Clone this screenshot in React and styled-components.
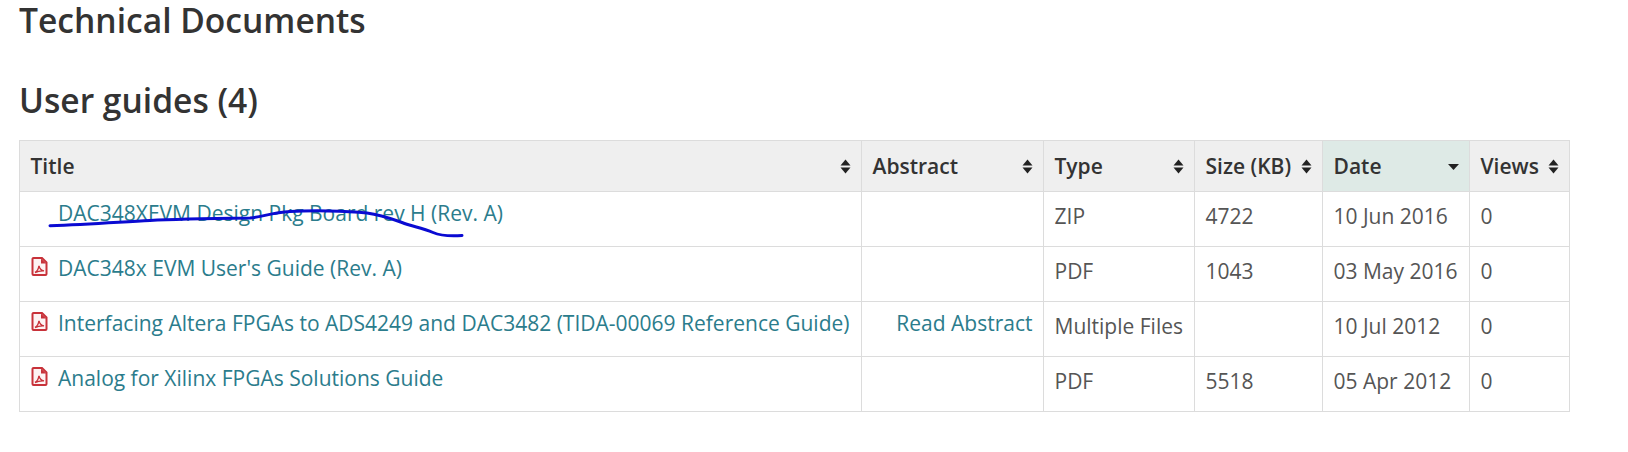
import React from 'react';
import styled, { createGlobalStyle } from 'styled-components';

const GlobalStyle = createGlobalStyle`
    html, body {
        margin: 0;
        background: #fff;
        font-family: 'Open Sans', sans-serif;
        color: #333;
    }
`;

const Page = styled.div`
    position: relative;
    width: 1628px;
    height: 452px;
    overflow: hidden;
    padding: 0 0 0 19px;
    box-sizing: border-box;
`;

const Heading = styled.h2`
    margin: 0;
    font-size: 33.6px;
    line-height: 40px;
    font-weight: 600;
    color: #333;
`;

const SubHeading = styled(Heading)`
    margin-top: 40px;
    margin-bottom: 20px;
`;

const Table = styled.table`
    width: 1550px;
    table-layout: fixed;
    border-collapse: collapse;
    font-size: 21px;
`;

const Th = styled.th`
    position: relative;
    height: 51px;
    padding: 0 10.5px;
    box-sizing: border-box;
    text-align: left;
    font-weight: 600;
    color: #333;
    white-space: nowrap;
    background: ${(p) => (p.$active ? '#deeae6' : '#efefef')};
    border: 1px solid #dcdcdc;
`;

const Td = styled.td`
    height: 55px;
    padding: 0 10.5px;
    box-sizing: border-box;
    vertical-align: top;
    color: #555;
    white-space: nowrap;
    border: 1px solid #dcdcdc;
`;

const CellText = styled.div`
    padding-top: 10px;
    line-height: 28px;
`;

const TitleLine = styled.div`
    display: flex;
    align-items: flex-start;
    gap: 10.5px;
    padding-top: 7px;
    line-height: 28px;
`;

const IconSlot = styled.span`
    flex: none;
    width: 17px;
    height: 28px;
`;

const DocLink = styled.a`
    color: #2b7c8c;
    text-decoration: none;
`;

const AbstractLink = styled(DocLink)`
    display: block;
    padding-top: 7px;
    line-height: 28px;
    text-align: right;
`;

const SortIcon = styled.svg`
    position: absolute;
    top: 18px;
    right: 10px;
    width: 11px;
    height: 15px;
`;

const PdfGlyph = styled.svg`
    display: block;
    margin-top: 3px;
    width: 17px;
    height: 19px;
`;

const Scribble = styled.svg`
    position: absolute;
    left: 0;
    top: 0;
    pointer-events: none;
`;

const columns = [
    { label: 'Title', width: 842 },
    { label: 'Abstract', width: 182 },
    { label: 'Type', width: 151 },
    { label: 'Size (KB)', width: 128 },
    { label: 'Date', width: 147, active: true },
    { label: 'Views', width: 100 },
];

const rows = [
    { title: 'DAC348XEVM Design Pkg Board rev H (Rev. A)', type: 'ZIP', size: '4722', date: '10 Jun 2016' },
    { title: "DAC348x EVM User's Guide (Rev. A)", pdf: true, type: 'PDF', size: '1043', date: '03 May 2016' },
    {
        title: 'Interfacing Altera FPGAs to ADS4249 and DAC3482 (TIDA-00069 Reference Guide)',
        pdf: true,
        abstract: 'Read Abstract',
        type: 'Multiple Files',
        size: '',
        date: '10 Jul 2012',
    },
    { title: 'Analog for Xilinx FPGAs Solutions Guide', pdf: true, type: 'PDF', size: '5518', date: '05 Apr 2012' },
];

const PdfIcon = () => (
    <PdfGlyph viewBox="0 0 17 19">
        <path d="M2.500 1h8.500l4.500 4.500v11.500a1 1 0 0 1-1 1H2.500a1 1 0 0 1-1-1V2a1 1 0 0 1 1-1z" fill="#fdf3f3" stroke="#c8323a" strokeWidth="2" />
        <path d="M10 1.500v5h5.200z" fill="#c8323a" />
        <path d="M4 15.500c2-1 3.400-3.400 4-6.600 .6 3 2.200 4.500 5 5-3.300-.2-6.300.3-9 1.600z" fill="none" stroke="#c8323a" strokeWidth="1.400" />
    </PdfGlyph>
);

const SortArrows = ({ active }) => (
    <SortIcon viewBox="0 0 11 15">
        {active ? (
            <path d="M0 5h11L5.500 11z" fill="#222" />
        ) : (
            <>
                <path d="M0.500 6.500h10L5.500 0.500z" fill="#222" />
                <path d="M0.500 8.500h10L5.500 14.500z" fill="#222" />
            </>
        )}
    </SortIcon>
);

const App = () => {
    return (
        <>
            <GlobalStyle />
            <Page>
                <Heading>Technical Documents</Heading>
                <SubHeading>User guides (4)</SubHeading>
                <Table>
                    <colgroup>
                        {columns.map((c) => (
                            <col key={c.label} style={{ width: c.width }} />
                        ))}
                    </colgroup>
                    <thead>
                        <tr>
                            {columns.map((c) => (
                                <Th key={c.label} $active={c.active}>
                                    {c.label}
                                    <SortArrows active={c.active} />
                                </Th>
                            ))}
                        </tr>
                    </thead>
                    <tbody>
                        {rows.map((row) => (
                            <tr key={row.title}>
                                <Td>
                                    <TitleLine>
                                        <IconSlot>{row.pdf && <PdfIcon />}</IconSlot>
                                        <DocLink href="#">{row.title}</DocLink>
                                    </TitleLine>
                                </Td>
                                <Td>{row.abstract && <AbstractLink href="#">{row.abstract}</AbstractLink>}</Td>
                                <Td><CellText>{row.type}</CellText></Td>
                                <Td><CellText>{row.size}</CellText></Td>
                                <Td><CellText>{row.date}</CellText></Td>
                                <Td><CellText>0</CellText></Td>
                            </tr>
                        ))}
                    </tbody>
                </Table>
                <Scribble width="1628" height="452" viewBox="0 0 1628 452">
                    <path
                        d="M50 225.700C90 224.500 120 222 150 220.500C175 219 210 218.500 250 218C262 217 272 212.500 290 211.500C310 210.500 345 210.500 367 213C382 215 392 219 402 222.500C412 226.500 422 227.500 433 232.500C440 235.500 448 236.500 462 235.500"
                        fill="none"
                        stroke="#0a0ad2"
                        strokeWidth="3"
                        strokeLinecap="round"
                    />
                </Scribble>
            </Page>
        </>
    );
};

export default App;
